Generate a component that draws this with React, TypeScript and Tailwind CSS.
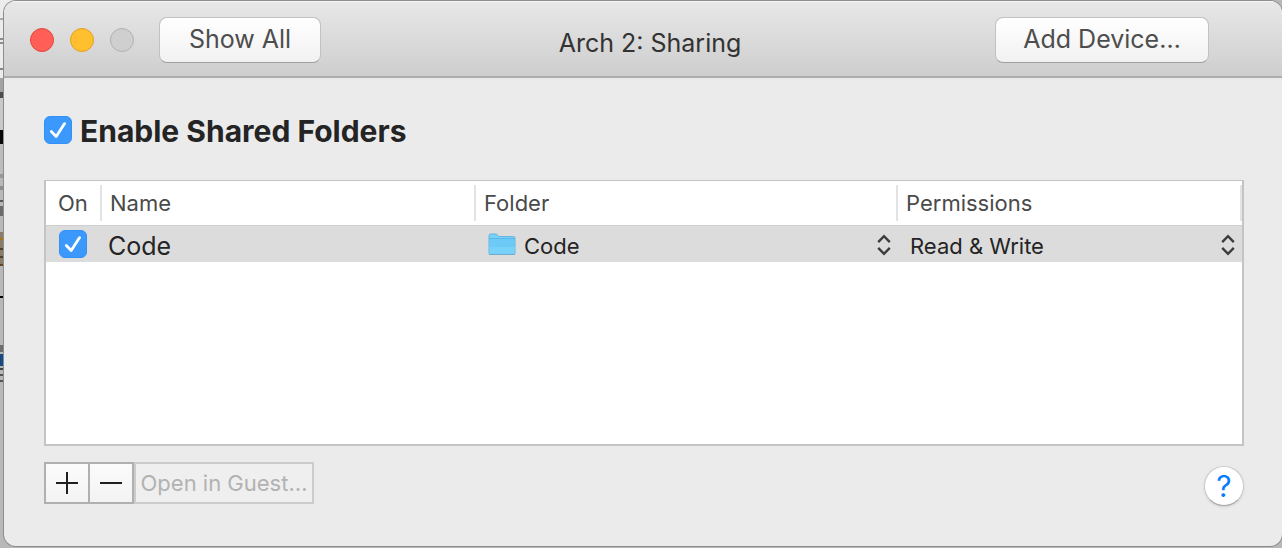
import React from 'react';

const Checkbox: React.FC<{ id: string; label?: string }> = ({ id, label }) => (
  <span className="relative block h-7 w-7 shrink-0">
    <input
      id={id}
      type="checkbox"
      defaultChecked
      aria-label={label}
      className="peer block h-7 w-7 appearance-none rounded-md border border-gray-400 bg-white checked:border-[#3390f8] checked:bg-[#3b99fc]"
    />
    <svg
      viewBox="0 0 28 28"
      className="pointer-events-none absolute inset-0 hidden h-7 w-7 peer-checked:block"
      fill="none"
      stroke="white"
      strokeWidth="2.8"
      strokeLinecap="round"
      strokeLinejoin="round"
    >
      <path d="M7.3 15.6 12.2 20.6 20.6 7.6" />
    </svg>
  </span>
);

const UpDown: React.FC = () => (
  <svg
    viewBox="0 0 14 22"
    className="pointer-events-none absolute top-2 right-[7px] h-[22px] w-[14px]"
    fill="none"
    stroke="#3c3c3c"
    strokeWidth="2.4"
  >
    <path d="M1.2 8.2 7 2.2l5.8 6M1.2 13.8l5.8 6 5.8-6" />
  </svg>
);

const FolderIcon: React.FC = () => (
  <svg viewBox="0 0 28 24" className="h-6 w-7 shrink-0">
    <path d="M1 3.5Q1 2 2.5 2H8Q9 2 9.5 3L10.5 4.5H25.5Q27 4.5 27 6V21Q27 22.5 25.5 22.5H2.5Q1 22.5 1 21Z" fill="#79d0f8" stroke="#67b5dc" />
    <path d="M1.5 7H26.5V21.5H1.5Z" fill="#6dcaf6" />
    <path d="M1.5 15H26.5V21.5H1.5Z" fill="#78d1f9" />
    <path d="M1 6.5H27" stroke="#58b8e8" />
    <path d="M1 22.5H27" stroke="#70aecb" />
  </svg>
);

/* Sliver of the desktop that shows at the left of the window */
const strips = [
  { y: 0, h: 78, fill: '#ececec' },
  { y: 18, h: 2, fill: '#aaaaaa' },
  { y: 38, h: 2, fill: '#8c8c8c' },
  { y: 42, h: 2, fill: '#8c8c8c' },
  { y: 68, h: 2, fill: '#858585' },
  { y: 78, h: 14, fill: '#a2a2a2' },
  { y: 92, h: 6, fill: '#4d4d4d' },
  { y: 98, h: 32, fill: '#c9c9c9' },
  { y: 130, h: 14, fill: '#080808' },
  { y: 144, h: 30, fill: '#bcbcbc' },
  { y: 174, h: 4, fill: '#999999' },
  { y: 186, h: 4, fill: '#8d8d8d' },
  { y: 200, h: 2, fill: '#575757' },
  { y: 206, h: 10, fill: '#6b6b6b' },
  { y: 232, h: 34, fill: '#8c7b66' },
  { y: 238, h: 2, fill: '#a87514' },
  { y: 248, h: 2, fill: '#51412c' },
  { y: 256, h: 2, fill: '#51412c' },
  { y: 264, h: 2, fill: '#604622' },
  { y: 296, h: 2, fill: '#000000' },
  { y: 345, h: 7, fill: '#6d6d6d' },
  { y: 354, h: 12, fill: '#174985' },
  { y: 368, h: 2, fill: '#444444' },
  { y: 374, h: 2, fill: '#555555' },
  { y: 380, h: 2, fill: '#555555' },
];

const columns = ['On', 'Name', 'Folder', 'Permissions'];

const App: React.FC = () => {
  return (
    <div className="relative bg-[#b8b8b8] pt-px pb-0.5 pl-1 font-[Inter,'Liberation_Sans',sans-serif] text-[#242424]">
      <svg className="absolute top-0 left-0 h-full w-5" aria-hidden="true">
        {strips.map((strip) => (
          <rect key={strip.y} y={strip.y} width={strip.y === 0 ? 20 : 4} height={strip.h} fill={strip.fill} />
        ))}
      </svg>

      <main className="relative overflow-hidden rounded-xl bg-[#ebebeb] shadow-[0_0_0_1px_#8d8d8d]">
        {/* Title bar */}
        <header className="flex items-start border-b-2 border-[#adadad] bg-gradient-to-b from-[#e8e8e8] to-[#cecece] pt-4 pr-[73px] pb-[13px] pl-[26px] shadow-[inset_0_1px_0_#f6f6f6]">
          <div className="flex gap-4 pt-[11px]">
            <button aria-label="Close" className="h-6 w-6 rounded-full border border-[#e2463f] bg-[#ff5f57]" />
            <button aria-label="Minimize" className="h-6 w-6 rounded-full border border-[#dfa123] bg-[#ffbf2f]" />
            <button aria-label="Zoom" disabled className="h-6 w-6 rounded-full border border-[#b1b1b1] bg-[#cfcfcf]" />
          </div>
          <button className="ml-[25px] h-[46px] w-[162px] rounded-lg border border-[#c2c2c2] border-b-[#a0a0a0] bg-gradient-to-b from-white to-[#f1f1f1] text-[25px] text-[#4d4d4d]">
            Show All
          </button>
          <h1 className="flex-1 pt-1.5 pr-4 text-center text-[25px] leading-10 text-[#333333]">Arch 2: Sharing</h1>
          <button className="h-[46px] w-[214px] rounded-lg border border-[#c2c2c2] border-b-[#a0a0a0] bg-gradient-to-b from-white to-[#f1f1f1] text-[25px] text-[#4d4d4d]">
            Add Device…
          </button>
        </header>

        <div className="pt-8 pr-[38px] pb-10 pl-10">
          <div className="flex items-center gap-2">
            <Checkbox id="enable-shared" />
            <label htmlFor="enable-shared" className="pt-0.5 text-[30px] leading-[38px] font-bold">
              Enable Shared Folders
            </label>
          </div>

          {/* Shared folders */}
          <div className="mt-[30px] min-h-[266px] border-2 border-t border-[#c4c4c4] bg-white">
            <table className="w-full table-fixed border-collapse text-left">
              <colgroup>
                <col className="w-14" />
                <col className="w-[374px]" />
                <col className="w-[422px]" />
                <col />
              </colgroup>
              <thead>
                <tr className="h-11 border-b border-[#cfcfcf]">
                  {columns.map((column) => (
                    <th key={column} scope="col" className="p-0 text-[22px] font-normal text-[#4a4a4a]">
                      <div className={`border-r-2 border-[#e3e3e3] leading-9 ${column === 'On' ? 'pl-3' : 'pl-2'}`}>{column}</div>
                    </th>
                  ))}
                </tr>
              </thead>
              <tbody>
                <tr className="h-9 bg-[#dcdcdc]">
                  <td className="p-0 pl-[13px]">
                    <Checkbox id="share-on" label="Share Code" />
                  </td>
                  <td className="p-0 pt-1 pl-1.5 text-[25px] leading-8">Code</td>
                  <td className="p-0">
                    <div className="relative flex items-center gap-2 pl-3">
                      <FolderIcon />
                      <select aria-label="Folder" className="h-9 min-w-0 flex-1 appearance-none bg-transparent pt-1 text-[22px]">
                        <option>Code</option>
                      </select>
                      <UpDown />
                    </div>
                  </td>
                  <td className="p-0">
                    <div className="relative pl-3">
                      <select aria-label="Permissions" className="block h-9 w-full appearance-none bg-transparent pt-1 text-[22px]">
                        <option>Read &amp; Write</option>
                      </select>
                      <UpDown />
                    </div>
                  </td>
                </tr>
              </tbody>
            </table>
          </div>

          <footer className="mt-4 flex items-start">
            <button aria-label="Add folder" className="flex h-[42px] w-[46px] items-center justify-center border-2 border-[#b0b0b0] bg-gradient-to-b from-[#fbfbfb] to-[#f3f3f3]">
              <svg viewBox="0 0 22 22" className="h-[22px] w-[22px]" stroke="#1f1f1f" strokeWidth="2">
                <path d="M0 11h22M11 0v22" />
              </svg>
            </button>
            <button aria-label="Remove folder" className="flex h-[42px] w-11 items-center justify-center border-2 border-l-0 border-[#b0b0b0] bg-gradient-to-b from-[#fbfbfb] to-[#f3f3f3]">
              <svg viewBox="0 0 22 22" className="h-[22px] w-[22px]" stroke="#1f1f1f" strokeWidth="2">
                <path d="M0 11h22" />
              </svg>
            </button>
            <button disabled className="h-[42px] w-[180px] border-2 border-[#cccccc] bg-[#efefef] text-[22px] whitespace-nowrap text-[#b2b2b2]">
              Open in Guest…
            </button>
            <button aria-label="Help" className="mt-1 ml-auto flex h-10 w-10 items-center justify-center rounded-full border border-[#cccccc] border-b-[#aaaaaa] bg-white text-[30px] text-[#0a7cff] shadow-sm">
              ?
            </button>
          </footer>
        </div>
      </main>
    </div>
  );
};

export default App;
